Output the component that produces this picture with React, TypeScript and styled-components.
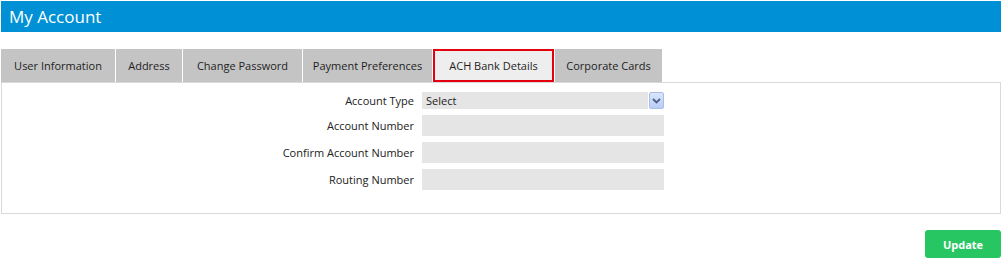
import { createGlobalStyle } from 'styled-components';
import styled from 'styled-components';

const GlobalStyle = createGlobalStyle`
    html, body { margin: 0; padding: 0; background: #fff; }
    body { font-family: "Open Sans", "Liberation Sans", sans-serif; color: #222; }
`;

const Page = styled.div`
    width: 1005px;
    padding: 1px 4px 0 1px;
    box-sizing: border-box;
`;

const Header = styled.div`
    height: 31px;
    background: #0090d5;
    color: #fff;
    font-size: 17px;
    line-height: 31px;
    padding-left: 8px;
`;

const TabBar = styled.div`
    display: flex;
    gap: 1px;
    margin-top: 17px;
    height: 33px;
`;

const Tab = styled.div<{ $active?: boolean; $w: number }>`
    width: ${p => p.$w}px;
    box-sizing: border-box;
    background: ${p => (p.$active ? '#eeeeee' : '#c4c4c4')};
    border: ${p => (p.$active ? '2px solid #e4000f' : 'none')};
    font-size: 11px;
    color: #1e1e1e;
    display: flex;
    align-items: center;
    justify-content: center;
`;

const Panel = styled.div`
    border: 1px solid #d9d9d9;
    height: 132px;
    box-sizing: border-box;
    padding-top: 9px;
`;

const Row = styled.div`
    display: grid;
    grid-template-columns: 412px 242px;
    column-gap: 8px;
    align-items: center;
    margin-bottom: 6px;
`;

const Label = styled.label`
    text-align: right;
    font-size: 11px;
    color: #222;
`;

const Field = styled.div<{ $h: number }>`
    height: ${p => p.$h}px;
    background: #e5e5e5;
`;

const SelectBox = styled.div`
    height: 17px;
    display: flex;
    align-items: stretch;
`;

const SelectText = styled.div`
    flex: 1;
    background: #e5e5e5;
    font-size: 11px;
    line-height: 17px;
    padding-left: 4px;
    color: #222;
`;

const Arrow = styled.div`
    width: 15px;
    margin-left: 1px;
    background: linear-gradient(#d9e5fb, #b9cdf5);
    border: 1px solid #a9bde8;
    box-sizing: border-box;
    border-radius: 2px;
    display: flex;
    align-items: center;
    justify-content: center;
`;

const Footer = styled.div`
    display: flex;
    justify-content: flex-end;
    margin-top: 16px;
`;

const UpdateButton = styled.button`
    width: 76px;
    height: 28px;
    background: #27c662;
    color: #fff;
    border: none;
    border-radius: 3px;
    font-family: "Open Sans", "Liberation Sans", sans-serif;
    font-size: 11px;
    font-weight: 700;
`;

const tabs = [
    { label: 'User Information', w: 114 },
    { label: 'Address', w: 66 },
    { label: 'Change Password', w: 119 },
    { label: 'Payment Preferences', w: 129 },
    { label: 'ACH Bank Details', w: 121, active: true },
    { label: 'Corporate Cards', w: 107 },
];

export default function App() {
    return (
        <Page>
            <GlobalStyle />
            <Header>My Account</Header>
            <TabBar>
                {tabs.map(t => (
                    <Tab key={t.label} $w={t.w} $active={t.active}>{t.label}</Tab>
                ))}
            </TabBar>
            <Panel>
                <Row>
                    <Label>Account Type</Label>
                    <SelectBox>
                        <SelectText>Select</SelectText>
                        <Arrow>
                            <svg width="9" height="6" viewBox="0 0 9 6">
                                <path d="M1 1 L4.5 4.5 L8 1" stroke="#4d6185" strokeWidth="1.8" fill="none" />
                            </svg>
                        </Arrow>
                    </SelectBox>
                </Row>
                <Row>
                    <Label>Account Number</Label>
                    <Field $h={21} />
                </Row>
                <Row>
                    <Label>Confirm Account Number</Label>
                    <Field $h={21} />
                </Row>
                <Row>
                    <Label>Routing Number</Label>
                    <Field $h={21} />
                </Row>
            </Panel>
            <Footer>
                <UpdateButton>Update</UpdateButton>
            </Footer>
        </Page>
    );
}
